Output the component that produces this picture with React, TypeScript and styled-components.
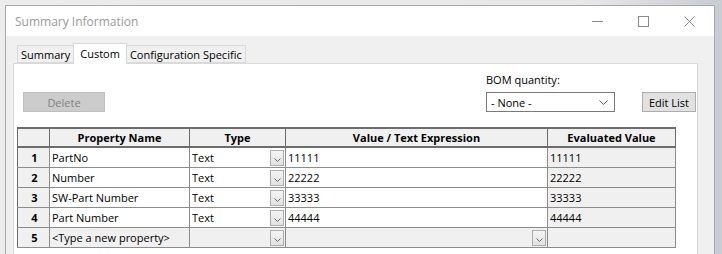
import React from "react";
import styled, { createGlobalStyle } from "styled-components";

const GlobalStyle = createGlobalStyle`
  html, body { margin: 0; padding: 0; }
  body {
    background: #e2e4e8;
    font-family: "Open Sans", "Noto Sans", "DejaVu Sans", sans-serif;
    font-size: 11px;
    color: #000;
  }
`;

const Desktop = styled.div`
  width: 722px;
  height: 254px;
  overflow: hidden;
  padding: 5px 0 0 5px;
  box-sizing: border-box;
  background: linear-gradient(90deg, #ececec 0%, #e8e8ea 80%, #c9ccd3 100%);
`;

const Window = styled.div`
  width: 710px;
  height: 270px;
  box-sizing: border-box;
  border: 1px solid #a9a9a9;
  background: #f0f0f0;
  display: flex;
  flex-direction: column;
`;

const TitleBar = styled.div`
  height: 30px;
  background: #fff;
  display: flex;
  align-items: center;
  padding-left: 9px;
`;

const Title = styled.div`
  flex: 1;
  color: #9a9a9a;
  font-size: 12px;
`;

const Controls = styled.div`
  display: flex;
  align-items: center;
  margin-right: 2px;
`;

const CtrlBtn = styled.div`
  width: 46px;
  height: 30px;
  display: flex;
  align-items: center;
  justify-content: center;
`;

const Body = styled.div`
  flex: 1;
  padding: 7px 16px 0 7px;
  display: flex;
  flex-direction: column;
`;

const TabRow = styled.div`
  display: flex;
  align-items: flex-end;
  height: 20px;
  padding-left: 4px;
  position: relative;
  z-index: 1;
`;

const Tab = styled.div<{ $active?: boolean }>`
  box-sizing: border-box;
  height: ${(p) => (p.$active ? "21px" : "18px")};
  padding: ${(p) => (p.$active ? "0 6px 2px" : "0 3px")};
  margin-left: ${(p) => (p.$active ? "-1px" : "0")};
  margin-right: ${(p) => (p.$active ? "-1px" : "0")};
  margin-bottom: ${(p) => (p.$active ? "-1px" : "0")};
  background: ${(p) => (p.$active ? "#fff" : "#f0f0f0")};
  border: 1px solid #d9d9d9;
  border-bottom: ${(p) => (p.$active ? "none" : "1px solid #d9d9d9")};
  display: flex;
  align-items: center;
  white-space: nowrap;
  z-index: ${(p) => (p.$active ? 2 : 1)};
`;

const Panel = styled.div`
  flex: 1;
  background: #fff;
  border: 1px solid #d9d9d9;
  padding: 0 0 0 3px;
  display: flex;
  flex-direction: column;
`;

const Toolbar = styled.div`
  display: flex;
  align-items: flex-end;
  height: 48px;
  padding: 0 1px 0 6px;
  margin-bottom: 15px;
`;

const Button = styled.div<{ $disabled?: boolean; $w: number }>`
  box-sizing: border-box;
  width: ${(p) => p.$w}px;
  height: 20px;
  display: flex;
  align-items: center;
  justify-content: center;
  background: ${(p) => (p.$disabled ? "#cccccc" : "#e1e1e1")};
  border: 1px solid ${(p) => (p.$disabled ? "#bfbfbf" : "#adadad")};
  color: ${(p) => (p.$disabled ? "#838383" : "#000")};
`;

const BomGroup = styled.div`
  margin-left: auto;
  display: flex;
  flex-direction: column;
  gap: 5px;
`;

const Label = styled.div`
  line-height: 15px;
`;

const Select = styled.div`
  box-sizing: border-box;
  width: 129px;
  height: 20px;
  border: 1px solid #7a7a7a;
  display: flex;
  align-items: center;
  padding: 0 6px 0 4px;
  justify-content: space-between;
`;

const EditWrap = styled.div`
  margin-left: 27px;
`;

const Grid = styled.table`
  border-collapse: collapse;
  table-layout: fixed;
  width: 659px;
  border-top: 2px solid #6c6c6c;
  border-left: 1px solid #6c6c6c;
`;

const Col = styled.col<{ $w: number }>`
  width: ${(p) => p.$w}px;
`;

const Th = styled.th`
  height: 17px;
  padding: 0;
  background: #f0f0f0;
  font-weight: 700;
  text-align: center;
  border-right: 1px solid #6c6c6c;
  border-bottom: 2px solid #6c6c6c;
  white-space: nowrap;
`;

const Td = styled.td<{ $gray?: boolean; $num?: boolean }>`
  height: 19px;
  padding: 0 0 0 2px;
  background: ${(p) => (p.$gray ? "#f0f0f0" : "#fff")};
  font-weight: ${(p) => (p.$num ? 700 : 400)};
  text-align: ${(p) => (p.$num ? "center" : "left")};
  border-right: 1px solid #8c8c8c;
  border-bottom: 1px solid #8c8c8c;
  white-space: nowrap;
  overflow: hidden;
`;

const CellFlex = styled.div`
  display: flex;
  align-items: center;
  justify-content: space-between;
  height: 19px;
`;

const DropBtn = styled.div`
  box-sizing: border-box;
  width: 14px;
  height: 16px;
  margin-right: 1px;
  border: 1px solid #adadad;
  background: linear-gradient(#f4f4f4, #e2e2e2);
  display: flex;
  align-items: flex-end;
  justify-content: center;
  padding-bottom: 3px;
`;

const Chevron = ({ w = 8, h = 4, color = "#6a6a6a" }: { w?: number; h?: number; color?: string }) => (
  <svg width={w + 1} height={h + 1} viewBox={`0 0 ${w + 1} ${h + 1}`}>
    <polyline points={`0.5,0.5 ${(w + 1) / 2},${h + 0.5} ${w + 0.5},0.5`} fill="none" stroke={color} strokeWidth="1" />
  </svg>
);

const rows = [
  { n: 1, name: "PartNo", type: "Text", value: "11111" },
  { n: 2, name: "Number", type: "Text", value: "22222" },
  { n: 3, name: "SW-Part Number", type: "Text", value: "33333" },
  { n: 4, name: "Part Number", type: "Text", value: "44444" },
];

export default function App() {
  return (
    <>
      <GlobalStyle />
      <Desktop>
        <Window>
          <TitleBar>
            <Title>Summary Information</Title>
            <Controls>
              <CtrlBtn>
                <svg width="11" height="11"><line x1="0" y1="5.5" x2="11" y2="5.5" stroke="#8a8a8a" /></svg>
              </CtrlBtn>
              <CtrlBtn>
                <svg width="11" height="11"><rect x="0.5" y="0.5" width="10" height="10" fill="none" stroke="#8a8a8a" /></svg>
              </CtrlBtn>
              <CtrlBtn>
                <svg width="11" height="11"><path d="M0.5 0.5 L10.5 10.5 M10.5 0.5 L0.5 10.5" stroke="#8a8a8a" /></svg>
              </CtrlBtn>
            </Controls>
          </TitleBar>
          <Body>
            <TabRow>
              <Tab>Summary</Tab>
              <Tab $active>Custom</Tab>
              <Tab>Configuration Specific</Tab>
            </TabRow>
            <Panel>
              <Toolbar>
                <Button $disabled $w={82}>Delete</Button>
                <BomGroup>
                  <Label>BOM quantity:</Label>
                  <Select>
                    <span>- None -</span>
                    <Chevron w={8} h={4} color="#666" />
                  </Select>
                </BomGroup>
                <EditWrap>
                  <Button $w={54}>Edit List</Button>
                </EditWrap>
              </Toolbar>
              <Grid>
                <colgroup>
                  <Col $w={32} />
                  <Col $w={140} />
                  <Col $w={96} />
                  <Col $w={262} />
                  <Col $w={128} />
                </colgroup>
                <thead>
                  <tr>
                    <Th></Th>
                    <Th>Property Name</Th>
                    <Th>Type</Th>
                    <Th>Value / Text Expression</Th>
                    <Th>Evaluated Value</Th>
                  </tr>
                </thead>
                <tbody>
                  {rows.map((r) => (
                    <tr key={r.n}>
                      <Td $gray $num>{r.n}</Td>
                      <Td>{r.name}</Td>
                      <Td>
                        <CellFlex>
                          <span>{r.type}</span>
                          <DropBtn><Chevron w={6} h={3} /></DropBtn>
                        </CellFlex>
                      </Td>
                      <Td>{r.value}</Td>
                      <Td $gray>{r.value}</Td>
                    </tr>
                  ))}
                  <tr>
                    <Td $gray $num>5</Td>
                    <Td $gray>&lt;Type a new property&gt;</Td>
                    <Td $gray>
                      <CellFlex>
                        <span></span>
                        <DropBtn><Chevron w={6} h={3} /></DropBtn>
                      </CellFlex>
                    </Td>
                    <Td $gray>
                      <CellFlex>
                        <span></span>
                        <DropBtn><Chevron w={6} h={3} /></DropBtn>
                      </CellFlex>
                    </Td>
                    <Td $gray></Td>
                  </tr>
                </tbody>
              </Grid>
            </Panel>
          </Body>
        </Window>
      </Desktop>
    </>
  );
}
